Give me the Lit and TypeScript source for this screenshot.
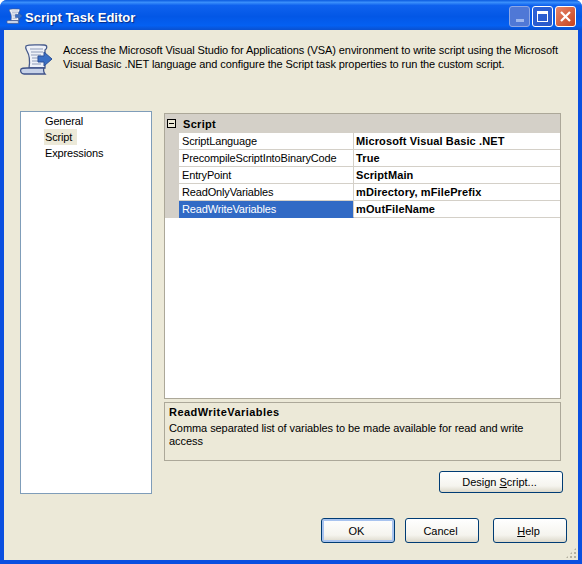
import { LitElement, html, css, svg } from "lit";
import { customElement } from "lit/decorators.js";

const scrollIcon = (size: number) => svg`
<svg class="scroll" width=${size} height=${size} viewBox="0 0 34 34">
  <path d="M7 3 C10 1 19 2 25 2 C29 2 28 6 26 7 L26 25 L10 25 C11 19 11 13 8 8 C7 6 6 5 7 3Z" fill="#eef1f8" stroke="#45598a" stroke-width="1.3"/>
  <path d="M11 6H24M12 9H24M12 12H22M13 15H20M13 18H20M13 21H22" stroke="#8e9bb8" stroke-width="1"/>
  <path d="M2 26 C3 25 6 25 8 25 L25 25 C24 27 25 30 26 31 L5 31 C2 31 1 28 2 26Z" fill="#c7d2e8" stroke="#3f5288" stroke-width="1.3"/>
  <path d="M19 13H25V9L33 16L25 23V19H19Z" fill="#3a6fc4" stroke="#2a4f96" stroke-width="1"/>
</svg>`;

@customElement("app-root")
export class AppRoot extends LitElement {
  static styles = css`
    :host { display: block; width: 582px; height: 564px; font-family: Tahoma, "Liberation Sans", Arial, sans-serif; font-size: 11px; color: #000; overflow: hidden; }
    .window { width: 582px; height: 564px; display: flex; flex-direction: column; background: #0a4fe0; border-radius: 7px 7px 0 0; overflow: hidden; }
    .titlebar { height: 30px; flex: none; box-sizing: border-box; display: flex; align-items: center; padding: 3px 6px 0 6px; color: #fff;
      background: linear-gradient(180deg, #0a5adf 0%, #3a8ffb 8%, #0f62ee 18%, #0357e6 55%, #0460f2 85%, #0a50cf 100%); }
    .titlebar .scroll { margin: 0 3px 0 0; }
    .title { font-size: 13px; font-weight: 700; flex: 1; text-shadow: 1px 1px 1px #0a2a80; margin-left: -1px; padding-top: 1px; }
    .scroll { display: block; flex: none; }
    .wbtn { width: 21px; height: 21px; box-sizing: border-box; border: 1px solid #fff; border-radius: 3px; margin-left: 2px; display: flex; align-items: center; justify-content: center; }
    .wbtn.min { background: #4f78d6; border-color: #8ea8e6; }
    .wbtn.max { background: linear-gradient(135deg, #2b62d9, #2a58c8); }
    .wbtn.close { background: linear-gradient(135deg, #e8866a, #c6421e); }
    .minbar { width: 8px; height: 3px; background: #9db7ee; margin-top: 8px; }
    .maxbox { width: 11px; height: 11px; box-sizing: border-box; border: 1px solid #fff; border-top-width: 3px; }
    .body { flex: 1; margin: 0 4px 4px 4px; background: #ece9d8; display: flex; flex-direction: column; position: relative; min-height: 0; }
    .head { height: 81px; flex: none; display: flex; align-items: flex-start; padding: 13px 0 0 15px; box-sizing: border-box; }
    .desc { margin: 0 0 0 10px; line-height: 14px; width: 500px; letter-spacing: -0.1px; }
    .main { flex: none; display: flex; margin-left: 16px; }
    .nav { width: 132px; height: 383px; box-sizing: border-box; background: #fff; border: 1px solid #7f9db9; padding: 1px 0 0 23px; }
    .nav div { height: 16px; line-height: 16px; padding: 0 0 0 1px; width: fit-content; letter-spacing: -0.15px; }
    .nav .sel { background: #ece9d8; padding: 0 5px 0 1px; }
    .right { width: 397px; margin-left: 12px; display: flex; flex-direction: column; margin-top: 2px; }
    .grid { height: 286px; box-sizing: border-box; background: #fff; border: 1px solid #aca899; flex: none; }
    .cat { height: 19px; background: #d4d0c8; display: flex; align-items: center; font-weight: 700; letter-spacing: 0.3px; }
    .pm { width: 9px; height: 9px; box-sizing: border-box; border: 1px solid #000; background: #ece9d8; margin: 0 7px 0 2px; position: relative; flex: none; }
    .pm::after { content: ""; position: absolute; left: 1px; right: 1px; top: 3px; height: 1px; background: #000; }
    .row { height: 17px; display: flex; border-left: 14px solid #d4d0c8; box-sizing: border-box; }
    .k, .v { box-sizing: border-box; height: 17px; line-height: 16px; border-bottom: 1px solid #d4d0c8; white-space: nowrap; padding-left: 3px; }
    .k { width: 175px; border-right: 1px solid #d4d0c8; letter-spacing: -0.15px; }
    .v { flex: 1; font-weight: 700; letter-spacing: 0.12px; padding-left: 2px; }
    .row.on .k { background: #316ac5; color: #fff; border-bottom-color: #316ac5; }
    .help { margin-top: 3px; height: 59px; box-sizing: border-box; border: 1px solid #aca899; padding: 3px 4px; line-height: 13px; }
    .help b { display: block; letter-spacing: 0.45px; }
    .help p { margin: 3px 0 0; letter-spacing: -0.07px; }
    .btn { box-sizing: border-box; height: 22px; border: 1px solid #003c74; border-radius: 3px; background: linear-gradient(180deg, #fff 0%, #f5f4ee 70%, #dcd8ca 100%); display: flex; align-items: center; justify-content: center; font: inherit; color: #000; padding: 0 3px 0 0; }
    .btn u { text-decoration: underline; }
    .design { width: 124px; margin: 10px -2px 0 auto; }
    .foot { display: flex; margin-top: 24px; padding-left: 317px; }
    .foot .btn { width: 74px; height: 25px; }
    .foot .ok { box-shadow: inset 0 0 0 2px #a9c4ef; }
    .foot .cancel { margin-left: 10px; }
    .foot .helpb { margin-left: 14px; }
    .grip { position: absolute; right: 1px; bottom: 1px; width: 12px; height: 12px; background-image: radial-gradient(circle, #b5b1a0 1px, transparent 1.2px); background-size: 4px 4px; clip-path: polygon(100% 0, 100% 100%, 0 100%); }
  `;

  render() {
    const rows = [
      ["ScriptLanguage", "Microsoft Visual Basic .NET"],
      ["PrecompileScriptIntoBinaryCode", "True"],
      ["EntryPoint", "ScriptMain"],
      ["ReadOnlyVariables", "mDirectory, mFilePrefix"],
      ["ReadWriteVariables", "mOutFileName"],
    ];
    return html`
      <div class="window">
        <div class="titlebar">
          ${scrollIcon(17)}
          <div class="title">Script Task Editor</div>
          <div class="wbtn min"><div class="minbar"></div></div>
          <div class="wbtn max"><div class="maxbox"></div></div>
          <div class="wbtn close">
            <svg width="13" height="13" viewBox="0 0 13 13"><path d="M2 2L11 11M11 2L2 11" stroke="#fff" stroke-width="2.2"/></svg>
          </div>
        </div>
        <div class="body">
          <div class="head">
            ${scrollIcon(34)}
            <div class="desc">Access the Microsoft Visual Studio for Applications (VSA) environment to write script using the Microsoft Visual Basic .NET language and configure the Script task properties to run the custom script.</div>
          </div>
          <div class="main">
            <div class="nav">
              <div>General</div>
              <div class="sel">Script</div>
              <div>Expressions</div>
            </div>
            <div class="right">
              <div class="grid">
                <div class="cat"><span class="pm"></span>Script</div>
                ${rows.map(([k, v], i) => html`
                  <div class="row ${i === 4 ? "on" : ""}"><div class="k">${k}</div><div class="v">${v}</div></div>`)}
              </div>
              <div class="help">
                <b>ReadWriteVariables</b>
                <p>Comma separated list of variables to be made available for read and write access</p>
              </div>
              <button class="btn design">Design&nbsp;<u>S</u>cript...</button>
            </div>
          </div>
          <div class="foot">
            <button class="btn ok">OK</button>
            <button class="btn cancel">Cancel</button>
            <button class="btn helpb"><u>H</u>elp</button>
          </div>
          <div class="grip"></div>
        </div>
      </div>
    `;
  }
}
